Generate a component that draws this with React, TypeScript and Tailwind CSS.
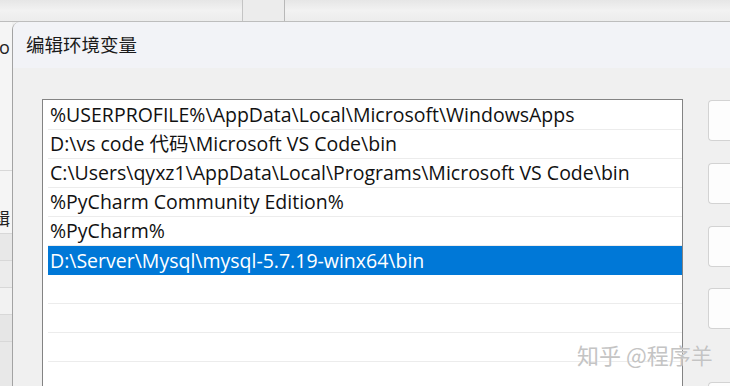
import React from "react";

const rows = [
  "%USERPROFILE%\\AppData\\Local\\Microsoft\\WindowsApps",
  "D:\\vs code 代码\\Microsoft VS Code\\bin",
  "C:\\Users\\qyxz1\\AppData\\Local\\Programs\\Microsoft VS Code\\bin",
  "%PyCharm Community Edition%",
  "%PyCharm%",
  "D:\\Server\\Mysql\\mysql-5.7.19-winx64\\bin",
  "",
  "",
  "",
  "",
];

const SELECTED = 5;

export default function App() {
  return (
    <div
      className="relative w-[730px] h-[386px] overflow-hidden bg-[#f0f0f0] flex flex-col"
      style={{ fontFamily: '"Open Sans", "Noto Sans CJK SC", sans-serif' }}
    >
      {/* background window top strip */}
      <div className="h-[22px] shrink-0 flex bg-gradient-to-b from-[#e6e6e6] via-[#f2f2f2] to-[#ececec] border-b border-[#bdbdbd]">
        <div className="w-[243px] shrink-0 border-r border-[#c4c4c4]" />
        <div className="w-[42px] shrink-0 border-r border-[#b8b8b8] bg-[#ececec]" />
        <div className="flex-1" />
      </div>

      <div className="flex flex-1 min-h-0">
        {/* background window left strip */}
        <div className="w-[12px] shrink-0 flex flex-col bg-[#f5f5f5] overflow-hidden">
          <div className="h-[148px] shrink-0 relative">
            <span className="absolute left-[-1px] top-[16px] text-[18px] leading-none text-[#222]">o</span>
          </div>
          <div className="h-[63px] shrink-0 border-t border-[#d8d8d8] flex items-end overflow-hidden">
            <span
              className="ml-[-7px] mb-[7px] text-[17px] leading-none text-[#222] whitespace-nowrap"
              style={{ fontFamily: '"Noto Sans CJK SC", sans-serif' }}
            >
              辑
            </span>
          </div>
          <div className="h-[27px] shrink-0 border-t border-[#d8d8d8] bg-[#e8e8e8]" />
          <div className="h-[27px] shrink-0 border-t border-[#d8d8d8] bg-[#ececec]" />
          <div className="h-[27px] shrink-0 border-t border-[#d8d8d8] bg-[#f2f2f2]" />
          <div className="h-[27px] shrink-0 border-t border-[#d8d8d8] bg-[#e6e6e6]" />
          <div className="flex-1 border-t border-[#d8d8d8] bg-[#e8e8e8]" />
        </div>

        {/* dialog */}
        <div className="flex-1 min-w-0 flex flex-col border-l border-[#a3a3a3] rounded-tl-[8px] overflow-hidden bg-[#f0f0f0]">
          <div
            className="h-[46px] shrink-0 bg-[#f2f3f7] flex items-center pl-[13px] text-[18.5px] text-[#1a1a1a] pb-[1px]"
            style={{ fontFamily: '"Noto Sans CJK SC", sans-serif' }}
          >
            编辑环境变量
          </div>

          <div className="flex flex-1 min-h-0 pt-[31px] pl-[29px]">
            {/* list */}
            <div className="w-[641px] shrink-0 border-t border-l border-r border-[#838383] bg-white pt-[1px] pl-[5px] flex flex-col overflow-hidden">
              {rows.map((r, i) => (
                <div
                  key={i}
                  className={
                    i === SELECTED
                      ? "h-[29px] shrink-0 flex items-center pl-[2px] bg-[#0078d7] text-white text-[19.5px] whitespace-nowrap"
                      : "h-[29px] shrink-0 flex items-center pl-[2px] border-b border-[#ececec] text-[#111] text-[19.5px] whitespace-nowrap"
                  }
                >
                  {r}
                </div>
              ))}
            </div>

            {/* buttons */}
            <div className="ml-[25px] flex-1 flex flex-col pt-[1px]">
              <div className="h-[41px] shrink-0 rounded-l-[4px] border border-r-0 border-[#d3d3d3] bg-[#fdfdfd]" />
              <div className="mt-[22px] h-[41px] shrink-0 rounded-l-[4px] border border-r-0 border-[#d3d3d3] bg-[#fdfdfd]" />
              <div className="mt-[22px] h-[41px] shrink-0 rounded-l-[4px] border border-r-0 border-[#d3d3d3] bg-[#fdfdfd]" />
              <div className="mt-[21px] h-[41px] shrink-0 rounded-l-[4px] border border-r-0 border-[#d3d3d3] bg-[#fdfdfd]" />
              <div className="mt-[53px] h-[41px] shrink-0 rounded-l-[4px] border border-r-0 border-[#d3d3d3] bg-[#fdfdfd]" />
            </div>
          </div>
        </div>
      </div>

      {/* watermark */}
      <div
        className="absolute left-[577px] top-[343px] text-[22px] leading-none text-[#c4c4c4] whitespace-nowrap"
        style={{ fontFamily: '"Noto Sans CJK SC", sans-serif', textShadow: "0 0 1px #ffffff" }}
      >
        知乎 @程序羊
      </div>
    </div>
  );
}
